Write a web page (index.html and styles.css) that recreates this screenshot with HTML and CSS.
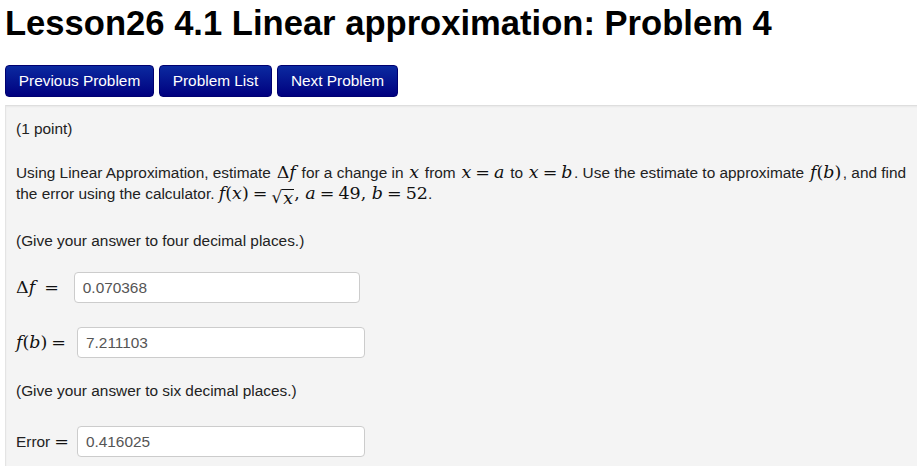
FILE: index.html
```html
<!DOCTYPE html>
<html>
<head>
<meta charset="utf-8">
<link rel="stylesheet" href="styles.css">
</head>
<body>
<div class="page">
  <h1 class="title">Lesson26 4.1 Linear approximation: Problem 4</h1>
  <div class="nav">
    <a class="btn btn-prev">Previous Problem</a>
    <a class="btn btn-list">Problem List</a>
    <a class="btn btn-next">Next Problem</a>
  </div>
  <div class="problem">
    <div class="points">(1 point)</div>
    <div class="statement">
      <div class="line line1">Using Linear Approximation, estimate <span class="m"><span class="up">Δ</span><i>f</i></span> for a change in <span class="m"><i>x</i></span> from <span class="m"><i>x</i><span class="op">=</span><i>a</i></span> to <span class="m"><i>x</i><span class="op">=</span><i>b</i></span>. Use the estimate to approximate <span class="m"><i>f</i>(<i>b</i>)</span>, and find</div>
      <div class="line">the error using the calculator. <span class="m"><i>f</i>(<i>x</i>)<span class="op">=</span><span class="sqrt"><span class="rad">√</span><span class="under"><i>x</i></span></span>, <i>a</i><span class="op">=</span>49, <i>b</i><span class="op">=</span>52</span>.</div>
    </div>
    <div class="note note1">(Give your answer to four decimal places.)</div>
    <div class="row row1">
      <span class="label m"><span class="up">Δ</span><i>f</i><span class="op">=</span></span>
      <span class="input">0.070368</span>
    </div>
    <div class="row row2">
      <span class="label m"><i>f</i>(<i>b</i>)<span class="op">=</span></span>
      <span class="input">7.211103</span>
    </div>
    <div class="note note2">(Give your answer to six decimal places.)</div>
    <div class="row row3">
      <span class="label">Error<span class="m op">=</span></span>
      <span class="input">0.416025</span>
    </div>
  </div>
</div>
</body>
</html>
```
FILE: styles.css
```css
html, body {
  margin: 0;
  padding: 0;
  background: #fff;
}
.page {
  width: 917px;
  height: 466px;
  overflow: hidden;
  font-family: "Liberation Sans", Arial, sans-serif;
  color: #222;
}
.title {
  margin: 0;
  padding: 3px 0 0 5px;
  font-size: 34.6px;
  line-height: 40px;
  font-weight: bold;
  color: #000;
}
.nav {
  display: flex;
  gap: 5px;
  margin: 22px 0 0 5px;
}
.btn {
  display: block;
  box-sizing: border-box;
  height: 32px;
  line-height: 30px;
  font-size: 15.4px;
  color: #fff;
  text-align: center;
  border-radius: 4px;
  background: linear-gradient(#0b2aa0, #00007f);
  border: 1px solid #000070;
}
.btn-prev { width: 149px; }
.btn-list { width: 113px; }
.btn-next { width: 121px; }
.problem {
  margin: 8px 0 0 5px;
  width: 940px;
  height: 400px;
  box-sizing: border-box;
  background: #f4f4f4;
  border-top: 1px solid #dedede;
  border-left: 1px solid #e4e4e4;
  box-shadow: inset 0 1px 2px rgba(0,0,0,0.05);
  padding: 13px 0 0 10px;
  font-size: 15.4px;
}
.points {
  line-height: 20px;
}
.statement {
  margin-top: 23px;
}
.line {
  height: 21px;
  line-height: 21px;
  white-space: nowrap;
}
.line1 .m {
  margin: 0 1.5px;
}
.m {
  font-family: "DejaVu Serif", "Liberation Serif", serif;
  font-size: 17.5px;
  line-height: 1;
  color: #111;
}
.m i {
  font-style: italic;
}
.up {
  font-style: normal;
}
.op {
  font-family: "DejaVu Serif", serif;
  font-style: normal;
  font-size: 17.5px;
  margin: 0 4px;
}
.sqrt {
  display: inline-flex;
  align-items: flex-start;
  vertical-align: -4px;
  line-height: 1;
}
.rad {
  font-family: "DejaVu Sans", sans-serif;
  font-size: 17px;
  line-height: 19px;
}
.under {
  border-top: 1px solid #111;
  line-height: 17px;
  margin-top: 1px;
  padding: 0 1px;
}
.note {
  height: 20px;
  line-height: 20px;
}
.note1 { margin-top: 27px; }
.note2 { margin-top: 23px; }
.row {
  display: flex;
  align-items: center;
  height: 31px;
}
.row1 { margin-top: 21px; }
.row2 { margin-top: 24px; }
.row3 { margin-top: 25px; }
.label {
  white-space: nowrap;
  margin-right: 7px;
}
.row1 .label .op {
  margin-left: 9px;
}
.row1 .label {
  margin-right: 11px;
}
.row3 .label {
  font-family: "Liberation Sans", Arial, sans-serif;
  font-size: 15.4px;
  margin-right: 4px;
}
.input {
  display: block;
  box-sizing: border-box;
  height: 31px;
  line-height: 29px;
  background: #fff;
  border: 1px solid #ccc;
  border-radius: 4px;
  padding-left: 8px;
  font-family: "Liberation Sans", Arial, sans-serif;
  font-size: 15.4px;
  color: #555;
}
.row1 .input { width: 286px; }
.row2 .input, .row3 .input { width: 288px; }
```
